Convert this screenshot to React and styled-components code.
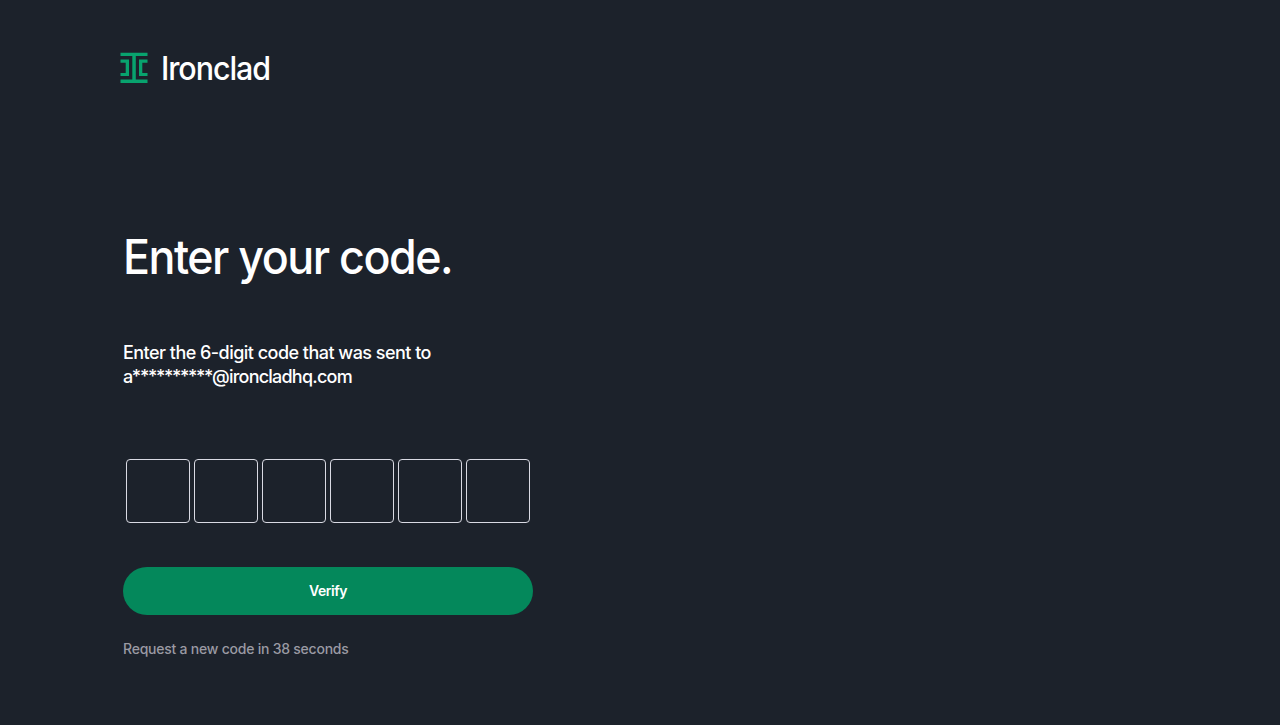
import React from "react";
import styled, { createGlobalStyle } from "styled-components";

const GlobalStyle = createGlobalStyle`
  * {
    box-sizing: border-box;
  }
  body {
    margin: 0;
    background: #1c222b;
    font-family: "Inter", "Liberation Sans", sans-serif;
    color: #ffffff;
  }
`;
const Page = styled.main`
  min-height: 100vh;
  padding: 48px 0 0 120px;
`;
const Brand = styled.header`
  display: flex;
  align-items: center;
  height: 40px;
`;
const Mark = styled.svg`
  display: block;
  width: 28px;
  height: 32px;
  fill: #08a36e;
`;
const BrandName = styled.span`
  margin-left: 13px;
  padding-top: 2px;
  font-size: 32px;
  line-height: 40px;
  font-weight: 500;
  letter-spacing: -1.1px;
  transform: scaleX(0.95);
  transform-origin: left center;
`;
const Form = styled.form`
  display: flex;
  flex-direction: column;
  width: 410px;
  margin: 139px 0 0 3px;
`;
const Title = styled.h1`
  margin: 0;
  font-size: 48px;
  line-height: 60px;
  font-weight: 500;
  letter-spacing: -1.6px;
  white-space: nowrap;
  transform: scaleX(0.933);
  transform-origin: left center;
`;
const Message = styled.p`
  margin: 54px 0 0;
  font-size: 18px;
  line-height: 24px;
  font-weight: 500;
  letter-spacing: -0.53px;
`;
const Masked = styled.span`
  letter-spacing: -1.35px;
`;
const Domain = styled.span`
  letter-spacing: -0.78px;
`;
const CodeRow = styled.div`
  display: flex;
  gap: 4px;
  margin: 70px 3px 0;
`;
const CodeInput = styled.input`
  width: 64px;
  height: 64px;
  padding: 0;
  background: transparent;
  border: 1px solid #d9dae3;
  border-radius: 4px;
  outline: none;
  font-family: inherit;
  font-size: 28px;
  text-align: center;
  color: #ffffff;
`;
const VerifyButton = styled.button`
  width: 100%;
  height: 48px;
  margin-top: 44px;
  padding: 0;
  background: #04885b;
  border: none;
  border-radius: 24px;
  font-family: inherit;
  font-size: 14px;
  line-height: 20px;
  font-weight: 600;
  letter-spacing: -0.45px;
  color: #ffffff;
  cursor: pointer;
`;
const Resend = styled.p`
  margin: 24px 0 0;
  font-size: 14px;
  line-height: 20px;
  font-weight: 500;
  letter-spacing: -0.23px;
  color: #9a9aa3;
`;

const Logo = () => (
  <Mark viewBox="0 0 28 32" aria-hidden="true">
    <path d="M0.5 0.8H27.5V4H15.8V27.5H27.5V31H0.5V27.5H12.3V4H0.5Z" />
    <path d="M0.5 7.5H9V24H0.5V21H5.7V10.8H0.5Z" />
    <path d="M27.5 7.5H19V24H27.5V21H22.3V10.8H27.5Z" />
  </Mark>
);

const App = () => {
  const digits = [0, 1, 2, 3, 4, 5];
  return (
    <>
      <GlobalStyle />
      <Page>
        <Brand>
          <Logo />
          <BrandName>Ironclad</BrandName>
        </Brand>
        <Form onSubmit={(e) => e.preventDefault()}>
          <Title>Enter your code.</Title>
          <Message>
            Enter the 6-digit code that was sent to
            <br />
            <Masked>a**********</Masked>
            <Domain>@ironcladhq.com</Domain>
          </Message>
          <CodeRow>
            {digits.map((digit) => (
              <CodeInput key={digit} type="text" maxLength={1} />
            ))}
          </CodeRow>
          <VerifyButton type="submit">Verify</VerifyButton>
          <Resend>Request a new code in 38 seconds</Resend>
        </Form>
      </Page>
    </>
  );
};
export default App;
